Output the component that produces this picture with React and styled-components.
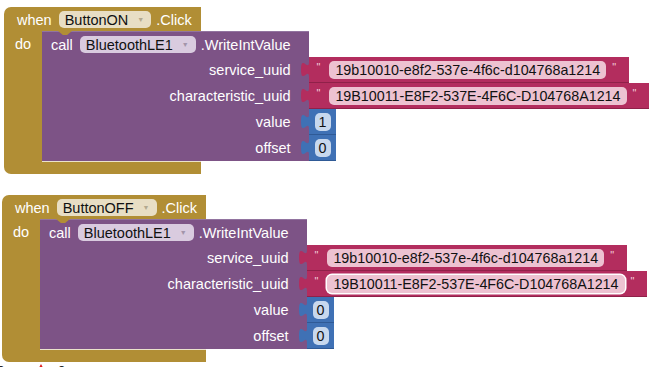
import React from 'react';
import styled, { createGlobalStyle } from 'styled-components';

const GOLD = '#b18e35';
const PURPLE = '#7d5386';
const PINK = '#b32d5e';
const BLUE = '#3f71b5';

const GlobalStyle = createGlobalStyle`
  html, body {
    margin: 0;
    padding: 0;
    background: #fff;
    overflow: hidden;
  }
  body {
    font-family: "Liberation Sans", Arial, sans-serif;
  }
`;

const Canvas = styled.div`
  width: 656px;
  height: 367px;
  overflow: hidden;
  box-sizing: border-box;
  padding-top: 7px;
  display: flex;
  flex-direction: column;
  align-items: flex-start;
  font-size: 14.5px;
  color: #fff;
`;

// when ... do ... event block
const Event = styled.div`
  display: flex;
  flex-direction: column;
  margin-left: ${p => p.$x}px;
  & + & {
    margin-top: 21px;
  }
`;

const EventHead = styled.div`
  display: flex;
  align-items: center;
  height: 25px;
  padding: 0 9px 0 13px;
  background: ${GOLD};
  border-radius: 7px 0 0 0;
  white-space: nowrap;
`;

const EventBody = styled.div`
  display: flex;
  contain: inline-size;
`;

const Arm = styled.div`
  flex: none;
  width: 38px;
  box-sizing: border-box;
  padding-left: 11px;
  line-height: 25px;
  background: ${GOLD};
`;

const EventFoot = styled.div`
  position: relative;
  height: 13px;
  background: ${GOLD};
  border-radius: 0 0 0 7px;

  &::before {
    content: '';
    position: absolute;
    left: 38px;
    right: 0;
    top: 0;
    height: 1px;
    background: rgba(255, 255, 255, 0.75);
  }
`;

const Dropdown = styled.span`
  display: inline-flex;
  align-items: center;
  gap: 9px;
  height: 17px;
  margin: 0 5px 0 7px;
  padding: 0 7px 0 6px;
  border-radius: 5px;
  color: #111;
  background: ${p => (p.$tone === 'gold' ? '#e8dec4' : '#d9cbdf')};

  &::after {
    content: '▼';
    font-size: 7px;
    color: ${p => (p.$tone === 'gold' ? '#b3a98f' : '#a395aa')};
  }
`;

// procedure call block
const Call = styled.div`
  flex: none;
  display: flex;
  align-items: flex-start;
`;

const CallBody = styled.div`
  position: relative;
  display: flex;
  flex-direction: column;
  background: ${PURPLE};
  border-top: 1px solid #9274a0;
  margin-top: -1px;

  &::before,
  &::after {
    content: '';
    position: absolute;
    left: 16px;
    width: 14px;
    height: 4px;
    clip-path: polygon(0 0, 100% 0, 65% 100%, 35% 100%);
  }
  &::before {
    top: -1px;
    background: ${GOLD};
  }
  &::after {
    bottom: -4px;
    background: ${PURPLE};
  }
`;

const CallRow = styled.div`
  display: flex;
  align-items: center;
  height: 25px;
  padding: 0 18px 0 9px;
  white-space: nowrap;
`;

const InputLabel = styled.div`
  display: flex;
  align-items: center;
  justify-content: flex-end;
  height: 26px;
  padding-right: 18px;
  white-space: nowrap;
`;

const Sockets = styled.div`
  display: flex;
  flex-direction: column;
  padding-top: 25px;
`;

const Value = styled.div`
  position: relative;
  display: flex;
  align-items: center;
  height: 26px;
  box-sizing: border-box;
  border-bottom: 1px solid ${p => (p.$kind === 'text' ? '#8f2149' : '#2f5a96')};
  padding: ${p => (p.$kind === 'text' ? '0 13px 0 8px' : '0 5px 0 6px')};
  background: ${p => (p.$kind === 'text' ? PINK : BLUE)};
  align-self: flex-start;
  white-space: nowrap;
`;

const Tab = styled.svg`
  position: absolute;
  left: -8px;
  top: 0;
`;

const Quote = styled.span`
  align-self: flex-start;
  margin-top: 5px;
  font-size: 11px;
  line-height: 1;
  color: #f2cfdb;
`;

const Field = styled.span`
  display: inline-block;
  height: 18px;
  line-height: 18px;
  margin: ${p => (p.$kind === 'text' ? '0 6px 0 9px' : '0')};
  padding: 0 ${p => (p.$kind === 'text' ? 6 : 4)}px;
  min-width: 8px;
  text-align: center;
  border-radius: 5px;
  font-size: 14.3px;
  color: #111;
  background: ${p => (p.$kind === 'text' ? '#edc2d1' : '#c7d8ee')};
  box-shadow: ${p => (p.$selected ? '0 0 0 1.5px #fff' : 'none')};
`;

const Status = styled.div`
  display: flex;
  align-items: flex-start;
  margin-top: 2px;
  margin-left: -3px;
  font-size: 14px;
  line-height: 1;
  color: #222;
`;

const WarnIcon = styled.svg`
  margin: 0 11px 0 30px;
`;

function OutputTab({ color }) {
  return (
    <Tab width="8" height="26" viewBox="0 0 8 26">
      <path d="M8 5 C8 15 0 -3 0 12.5 S8 10 8 20 Z" fill={color} />
    </Tab>
  );
}

function TextValue({ text, selected }) {
  return (
    <Value $kind="text">
      <OutputTab color={PINK} />
      <Quote>"</Quote>
      <Field $kind="text" $selected={selected}>{text}</Field>
      <Quote>"</Quote>
    </Value>
  );
}

function NumberValue({ n }) {
  return (
    <Value $kind="number">
      <OutputTab color={BLUE} />
      <Field $kind="number">{n}</Field>
    </Value>
  );
}

const SERVICE = '19b10010-e8f2-537e-4f6c-d104768a1214';
const CHARACTERISTIC = '19B10011-E8F2-537E-4F6C-D104768A1214';

function WriteEvent({ x, button, value, selected }) {
  return (
    <Event $x={x}>
      <EventHead>
        <span>when</span>
        <Dropdown $tone="gold">{button}</Dropdown>
        <span>.Click</span>
      </EventHead>
      <EventBody>
        <Arm>do</Arm>
        <Call>
          <CallBody>
            <CallRow>
              <span>call</span>
              <Dropdown $tone="purple">BluetoothLE1</Dropdown>
              <span>.WriteIntValue</span>
            </CallRow>
            <InputLabel>service_uuid</InputLabel>
            <InputLabel>characteristic_uuid</InputLabel>
            <InputLabel>value</InputLabel>
            <InputLabel>offset</InputLabel>
          </CallBody>
          <Sockets>
            <TextValue text={SERVICE} />
            <TextValue text={CHARACTERISTIC} selected={selected} />
            <NumberValue n={value} />
            <NumberValue n={0} />
          </Sockets>
        </Call>
      </EventBody>
      <EventFoot />
    </Event>
  );
}

export default function App() {
  return (
    <>
      <GlobalStyle />
      <Canvas>
        <WriteEvent x={4} button="ButtonON" value={1} />
        <WriteEvent x={2} button="ButtonOFF" value={0} selected />
        <Status>
          <span>0</span>
          <WarnIcon width="12" height="11" viewBox="0 0 12 11">
            <path d="M6 0 L12 11 L0 11 Z" fill="#e02020" />
          </WarnIcon>
          <span>0</span>
        </Status>
      </Canvas>
    </>
  );
}
